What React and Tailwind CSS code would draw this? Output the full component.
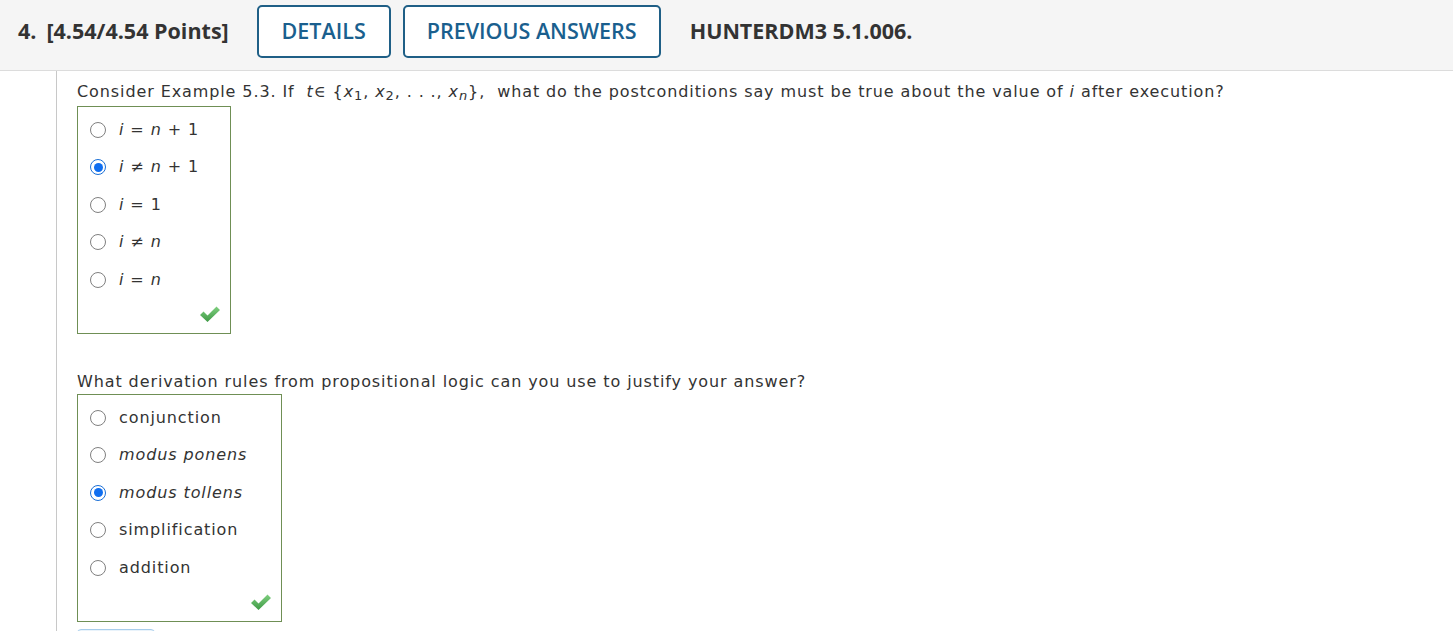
import React from "react";

const Check = () => (
    <svg width="22" height="18" viewBox="0 0 22 18">
        <defs>
            <linearGradient id="chk" x1="0" y1="0" x2="0" y2="1">
                <stop offset="0" stopColor="#7fcf7f" />
                <stop offset="1" stopColor="#3f9a46" />
            </linearGradient>
        </defs>
        <path d="M1 10 L4.5 6.5 L8.5 10.5 L17.5 1.5 L21 5 L8.5 17 Z" fill="url(#chk)" />
    </svg>
);

const Radio = ({ checked }) => (
    <span
        className={`flex items-center justify-center w-[16px] h-[16px] rounded-full shrink-0 bg-white ${
            checked ? "border-[1.5px] border-[#1a6fd6]" : "border border-[#808080]"
        }`}
    >
        {checked && <span className="w-[9px] h-[9px] rounded-full bg-[#0f6ef0]" />}
    </span>
);

const I = ({ children }) => <span className="italic">{children}</span>;

const AnswerBox = ({ options, width }) => (
    <div className={`${width} h-[228px] border border-[#6f8f55] flex flex-col pt-[4px] pl-[12px] pr-[9px]`}>
        {options.map((opt, i) => (
            <div key={i} className="h-[37.5px] flex items-center gap-[13px]">
                <Radio checked={opt.checked} />
                <span className="text-[#333] whitespace-nowrap">{opt.label}</span>
            </div>
        ))}
        <div className="flex-1 flex items-center justify-end pb-[3px]">
            <Check />
        </div>
    </div>
);

const first = [
    { label: <><I>i</I> = <I>n</I> + 1</> },
    { label: <><I>i</I> ≠ <I>n</I> + 1</>, checked: true },
    { label: <><I>i</I> = 1</> },
    { label: <><I>i</I> ≠ <I>n</I></> },
    { label: <><I>i</I> = <I>n</I></> },
];

const second = [
    { label: "conjunction" },
    { label: <I>modus ponens</I> },
    { label: <I>modus tollens</I>, checked: true },
    { label: "simplification" },
    { label: "addition" },
];

export default function App() {
    return (
        <div className="w-[1453px] h-[631px] overflow-hidden bg-white font-['DejaVu_Sans',Verdana,sans-serif] text-[16px] tracking-[0.9px] text-[#333]">
            {/* Question header */}
            <header className="h-[71px] bg-[#f5f5f5] border-b border-[#dcdcdc] flex items-start pt-[5px] pl-[18px] font-['Open_Sans',sans-serif] tracking-normal">
                <div className="h-[53px] flex items-center text-[21.5px] font-bold text-[#333]">
                    <span className="mr-[10px]">4.</span>
                    <span>[4.54/4.54 Points]</span>
                </div>
                <button className="ml-[28px] h-[53px] w-[134px] bg-white border-2 border-[#1f5f86] rounded-[5px] text-[21.5px] font-semibold text-[#1a5f8e]">
                    DETAILS
                </button>
                <button className="ml-[12px] h-[53px] w-[258px] bg-white border-2 border-[#1f5f86] rounded-[5px] text-[21.5px] font-semibold text-[#1a5f8e]">
                    PREVIOUS ANSWERS
                </button>
                <div className="ml-[29px] h-[53px] flex items-center text-[21.5px] font-bold text-[#333]">
                    HUNTERDM3 5.1.006.
                </div>
            </header>

            {/* Question body */}
            <div className="ml-[56px] border-l border-[#c8c8c8] h-full pl-[20px] pt-[8px]">
                <p className="leading-[24px] whitespace-nowrap pt-[1px]">
                    Consider Example 5.3. If&nbsp; <I>t</I>
                    <span className="font-['DejaVu_Serif',serif]">∈</span>{" "}
                    {"{"}<I>x</I><sub className="text-[13px]">1</sub>, <I>x</I>
                    <sub className="text-[13px]">2</sub>, . . ., <I>x</I>
                    <sub className="text-[13px]"><I>n</I></sub>{"}"},&nbsp; what do the postconditions say must be true about the value of <I>i</I> after execution?
                </p>
                <div className="mt-[2px]">
                    <AnswerBox options={first} width="w-[154px]" />
                </div>

                <p className="mt-[35px] leading-[24px] whitespace-nowrap pt-[1px]">
                    What derivation rules from propositional logic can you use to justify your answer?
                </p>
                <div>
                    <AnswerBox options={second} width="w-[205px]" />
                </div>

                <div className="mt-[7px] w-[78px] h-[12px] rounded-t-[4px] border border-[#a8cdeb] bg-[#e9f3fb]" />
            </div>
        </div>
    );
}
